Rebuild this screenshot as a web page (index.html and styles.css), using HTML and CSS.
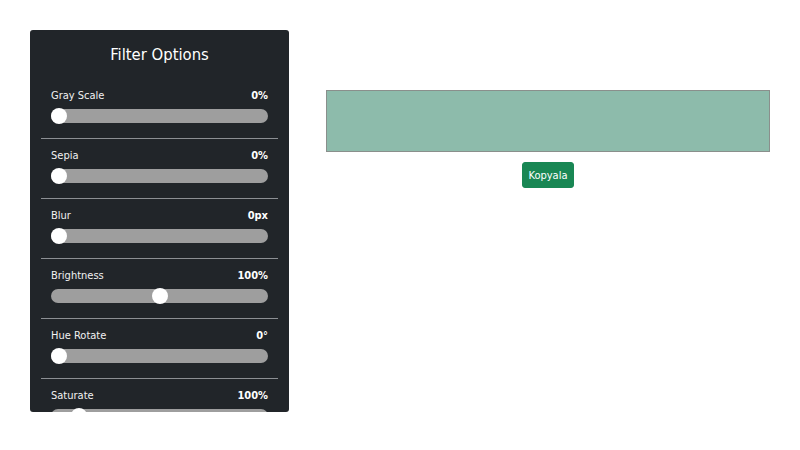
FILE: index.html
```html
<!DOCTYPE html>
<html lang="tr">
<head>
<meta charset="utf-8">
<title>Filter Options</title>
<link rel="stylesheet" href="styles.css">
</head>
<body>
<div class="page">
  <aside class="panel">
    <h2 class="panel-title">Filter Options</h2>
    <div class="filter">
      <div class="filter-head"><span>Gray Scale</span><b>0%</b></div>
      <input class="range" type="range" min="0" max="100" value="0">
    </div>
    <hr class="sep">
    <div class="filter">
      <div class="filter-head"><span>Sepia</span><b>0%</b></div>
      <input class="range" type="range" min="0" max="100" value="0">
    </div>
    <hr class="sep">
    <div class="filter">
      <div class="filter-head"><span>Blur</span><b>0px</b></div>
      <input class="range" type="range" min="0" max="20" value="0">
    </div>
    <hr class="sep">
    <div class="filter">
      <div class="filter-head"><span>Brightness</span><b>100%</b></div>
      <input class="range" type="range" min="0" max="200" value="100">
    </div>
    <hr class="sep">
    <div class="filter">
      <div class="filter-head"><span>Hue Rotate</span><b>0°</b></div>
      <input class="range" type="range" min="0" max="360" value="0">
    </div>
    <hr class="sep">
    <div class="filter">
      <div class="filter-head"><span>Saturate</span><b>100%</b></div>
      <input class="range" type="range" min="0" max="1000" value="100">
    </div>
  </aside>
  <main class="preview">
    <div class="swatch"></div>
    <button class="btn-copy" type="button">Kopyala</button>
  </main>
</div>
</body>
</html>
```
FILE: styles.css
```css
* { box-sizing: border-box; }
html, body { margin: 0; padding: 0; background: #ffffff; }
body {
  font-family: "DejaVu Sans Condensed", "DejaVu Sans", "Liberation Sans", sans-serif;
  font-stretch: condensed;
  color: #212529;
}

.page {
  display: flex;
  align-items: flex-start;
  padding: 30px;
}

.panel {
  width: 259px;
  height: 382px;
  overflow: hidden;
  background: #212529;
  border-radius: 3px;
  color: #f1f1f1;
  padding: 13px 11px 0;
  flex-shrink: 0;
}

.panel-title {
  margin: 0 0 12px;
  font-size: 16.5px;
  line-height: 24px;
  font-weight: 400;
  text-align: center;
  color: #ffffff;
}

.filter {
  padding: 9px 10px 15px;
}

.filter-head {
  display: flex;
  justify-content: space-between;
  align-items: center;
  height: 16px;
  font-size: 11px;
  line-height: 16px;
  margin-bottom: 5px;
}
.filter-head b { font-weight: 700; color: #ffffff; }

.range {
  -webkit-appearance: none;
  appearance: none;
  display: block;
  width: 100%;
  height: 14px;
  margin: 0;
  border-radius: 7px;
  background: #9e9e9e;
  outline: none;
}
.range::-webkit-slider-thumb {
  -webkit-appearance: none;
  appearance: none;
  width: 16px;
  height: 16px;
  border-radius: 50%;
  background: #ffffff;
  border: none;
}
.range::-moz-range-thumb {
  width: 16px;
  height: 16px;
  border-radius: 50%;
  background: #ffffff;
  border: none;
}

.sep {
  margin: 0;
  border: 0;
  border-top: 1px solid #8c8f93;
  height: 0;
}

.preview {
  flex: 1;
  margin-left: 37px;
  padding-top: 60px;
  display: flex;
  flex-direction: column;
  align-items: center;
}

.swatch {
  width: 100%;
  height: 62px;
  background: #8dbbab;
  border: 1px solid #8a8f8c;
}

.btn-copy {
  margin-top: 10px;
  height: 26px;
  padding: 0 5px;
  font-family: "DejaVu Sans Condensed", "DejaVu Sans", "Liberation Sans", sans-serif;
  font-stretch: condensed;
  font-size: 11px;
  color: #ffffff;
  background: #198754;
  border: 1px solid #198754;
  border-radius: 3px;
}
```
